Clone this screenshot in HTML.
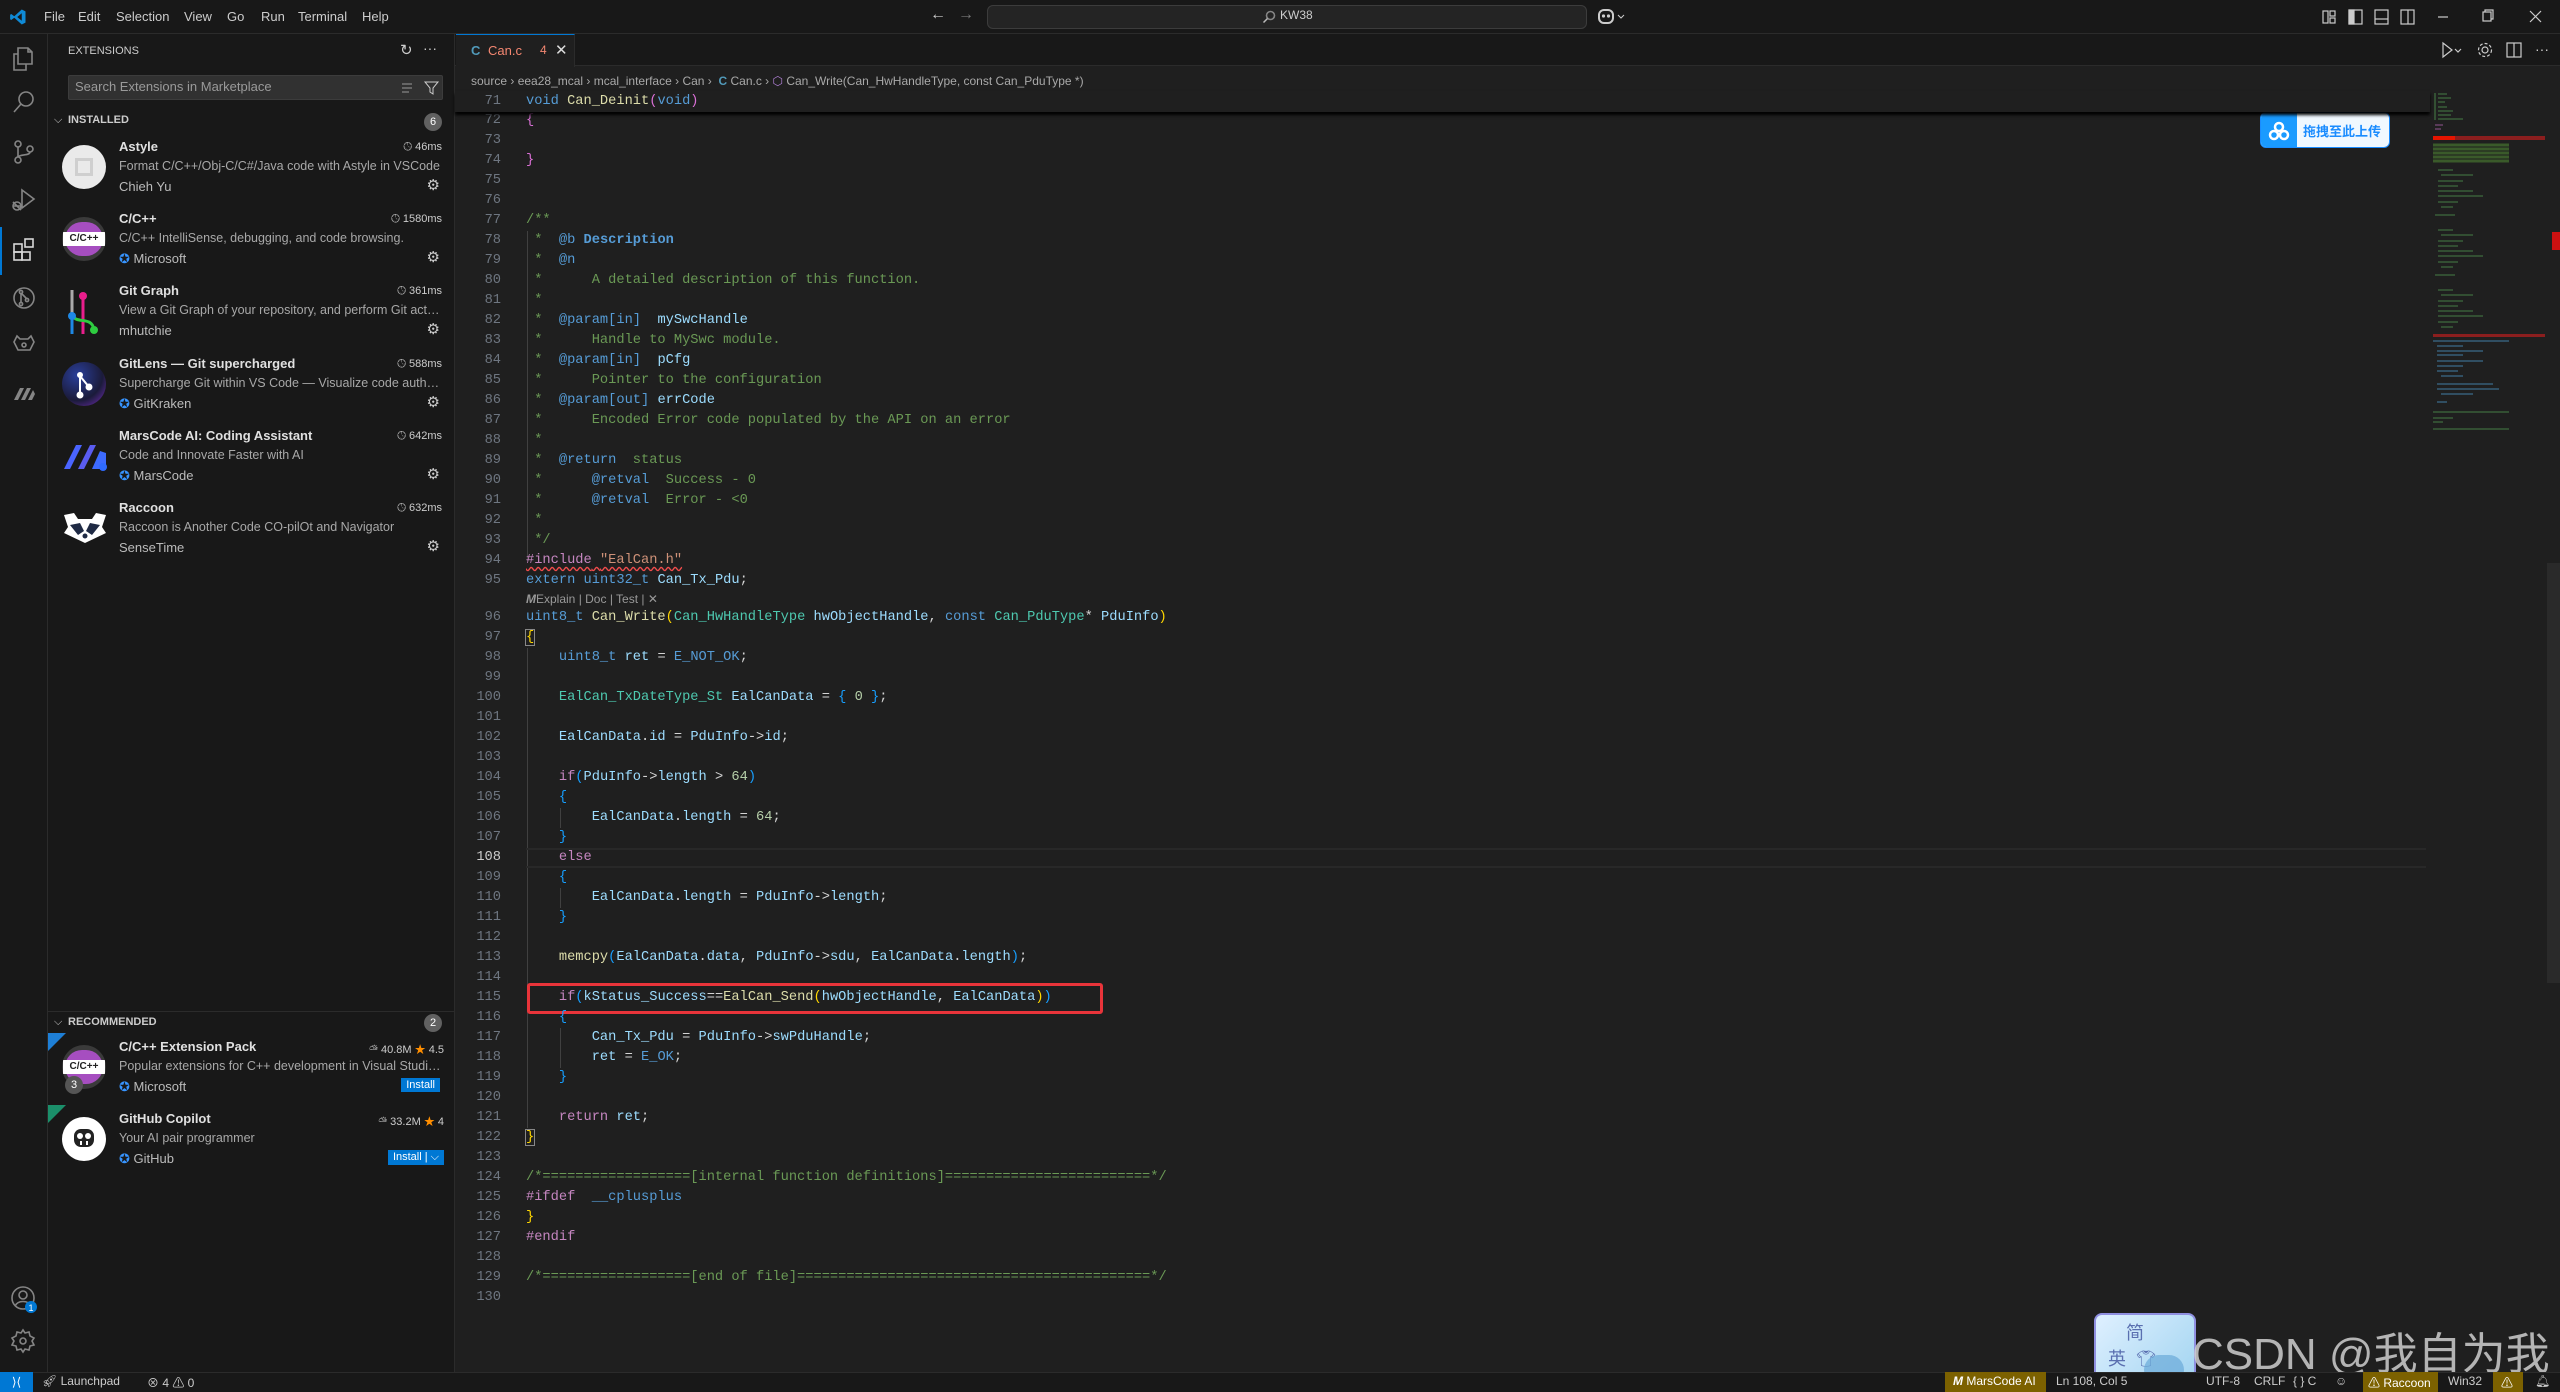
<!DOCTYPE html>
<html><head><meta charset="utf-8">
<style>
*{box-sizing:border-box;margin:0;padding:0}
body{width:2560px;height:1392px;overflow:hidden;background:#1f1f1f;font-family:"Segoe UI","Liberation Sans","Noto Sans CJK SC",sans-serif;color:#ccc;position:relative;font-size:13px}
.a{position:absolute}
#title{left:0;top:0;width:2560px;height:34px;background:#181818;border-bottom:1px solid #2b2b2b}
.menu{top:9px;font-size:13px;color:#ccc}
#act{left:0;top:34px;width:48px;height:1338px;background:#181818;border-right:1px solid #2b2b2b}
#side{left:48px;top:34px;width:407px;height:1338px;background:#181818;border-right:1px solid #2b2b2b}
#tabs{left:455px;top:34px;width:2105px;height:32px;background:#181818;border-bottom:1px solid #2b2b2b}
.code{font-family:"Liberation Mono",monospace;font-size:13.7px;white-space:pre;line-height:20px;height:20px;left:526px}
.ln{font-family:"Liberation Mono",monospace;font-size:13.7px;line-height:20px;height:20px;width:60px;left:441px;text-align:right;color:#6e7681}
.k{color:#569cd6}.t{color:#4ec9b0}.f{color:#dcdcaa}.v{color:#9cdcfe}.n{color:#b5cea8}.s{color:#ce9178}.p{color:#c586c0}.c{color:#6a9955}.w{color:#d4d4d4}.g{color:#ffd700}.m{color:#da70d6}.b{color:#179fff}.db{color:#569cd6;font-weight:bold}
.guide{width:1px;background:#404040}
.ext .nm{font-weight:bold;color:#e0e0e0;font-size:13px;white-space:nowrap}
.ext .ds{color:#a8a8a8;font-size:12.5px;white-space:nowrap;overflow:hidden;text-overflow:ellipsis;width:322px}
.ext .pb{color:#bbb;font-size:13px;white-space:nowrap}
.ext .tm{color:#ccc;font-size:11px;right:0;white-space:nowrap}
.ic{stroke:#858585;fill:none;stroke-width:1.6}
.st{top:1374px;font-size:12px;color:#ccc;white-space:nowrap}
</style></head><body>

<!-- TITLE BAR -->
<div id="title" class="a"></div>
<svg class="a" style="left:9px;top:8px" width="18" height="18" viewBox="0 0 24 24"><path d="M17 2 L22 4.5 V19.5 L17 22 L7 13 L3 16 L1.5 15 V9 L3 8 L7 11 Z M17 7 L11 12 L17 17 Z" fill="#0f8ad6"/></svg>
<div class="a menu" style="left:44px">File</div>
<div class="a menu" style="left:78px">Edit</div>
<div class="a menu" style="left:116px">Selection</div>
<div class="a menu" style="left:184px">View</div>
<div class="a menu" style="left:227px">Go</div>
<div class="a menu" style="left:261px">Run</div>
<div class="a menu" style="left:298px">Terminal</div>
<div class="a menu" style="left:362px">Help</div>
<div class="a" style="left:930px;top:6px;color:#ccc;font-size:16px">←</div>
<div class="a" style="left:958px;top:6px;color:#777;font-size:16px">→</div>
<div class="a" style="left:987px;top:5px;width:600px;height:24px;background:#242424;border:1px solid #3c3c3c;border-radius:6px"></div>
<svg class="a" style="left:1262px;top:10px" width="14" height="14" viewBox="0 0 14 14"><circle cx="8.5" cy="5.5" r="4" class="ic" stroke="#bbb"/><path d="M5.5 8.5 L1.5 12.5" stroke="#bbb" stroke-width="1.5"/></svg>
<div class="a" style="left:1280px;top:8px;font-size:12px;color:#ccc">KW38</div>
<svg class="a" style="left:1598px;top:8px" width="30" height="18" viewBox="0 0 30 18"><rect x="1" y="2" width="14" height="13" rx="5" fill="none" stroke="#ccc" stroke-width="2"/><circle cx="5.5" cy="8" r="1.6" fill="#ccc"/><circle cx="10.5" cy="8" r="1.6" fill="#ccc"/><path d="M20 7 L23 10 L26 7" stroke="#ccc" fill="none"/></svg>
<svg class="a" style="left:2320px;top:8px" width="190" height="18" viewBox="0 0 190 18">
<g fill="none" stroke="#ccc" stroke-width="1.2"><rect x="3" y="3" width="5" height="12"/><rect x="10" y="3" width="5" height="5"/><rect x="10" y="10" width="5" height="5"/>
<rect x="29" y="2" width="13" height="14"/><rect x="29" y="2" width="5" height="14" fill="#ccc"/>
<rect x="55" y="2" width="13" height="14"/><path d="M55 11 H68"/>
<rect x="81" y="2" width="13" height="14"/><path d="M88 2 V16"/>
<path d="M118 9 H128"/><rect x="163" y="4" width="8" height="9"/><path d="M165 4 V2 H173 V11 H171"/></g></svg>
<svg class="a" style="left:2528px;top:9px" width="16" height="16"><path d="M2 2 L13 13 M13 2 L2 13" stroke="#ccc" stroke-width="1.2"/></svg>

<!-- ACTIVITY BAR -->
<div id="act" class="a"></div>
<div class="a" style="left:0;top:227px;width:2px;height:48px;background:#0078d4"></div>
<svg class="a" style="left:10px;top:44px" width="28" height="360" viewBox="0 0 28 360">
<g class="ic">
<path d="M8 4 H18 L22 8 V20 H8 Z M18 4 V8 H22 M8 10 H4 V26 H16 V20"/>
<circle cx="16" cy="55" r="7"/><path d="M11 60 L4 68"/>
<circle cx="8" cy="100" r="3"/><circle cx="8" cy="116" r="3"/><circle cx="20" cy="105" r="3"/><path d="M8 103 V113 M20 108 C20 112 10 110 8 113"/>
<path d="M12 146 L24 155 L12 164 Z"/><circle cx="7" cy="162" r="4"/><path d="M3 158 L11 166 M3 162 H11"/>
</g>
<g fill="none" stroke="#d7d7d7" stroke-width="1.6"><rect x="4" y="200" width="8" height="8"/><rect x="4" y="208" width="8" height="8"/><rect x="12" y="208" width="8" height="8"/><rect x="15" y="195" width="8" height="8"/></g>
<g class="ic"><circle cx="14" cy="254" r="10"/><circle cx="11" cy="248" r="1.6"/><circle cx="11" cy="260" r="1.6"/><circle cx="17" cy="256" r="1.6"/><path d="M11 249 V259 M11 249 L17 255"/>
<path d="M4 298 L7 292 L10 295 H18 L21 292 L24 298 L20 306 H8 Z"/><circle cx="14" cy="301" r="2"/></g>
<path d="M4 356 L10 344 H14 L8 356 Z M11 356 L17 344 H21 L15 356 Z M18 356 L23 346 L25 350 L22 356 Z" fill="#858585"/>
</svg>
<svg class="a" style="left:10px;top:1285px" width="28" height="70" viewBox="0 0 28 70">
<g class="ic"><circle cx="13" cy="13" r="11"/><circle cx="13" cy="10" r="4"/><path d="M5 21 C8 15 18 15 21 21"/>
<circle cx="13" cy="56" r="3"/><path d="M13 45 L15 48 L19 47 L20 51 L24 53 L22 56 L24 60 L20 61 L19 65 L15 64 L13 67 L11 64 L7 65 L6 61 L2 60 L4 56 L2 53 L6 51 L7 47 L11 48 Z"/></g>
<circle cx="21" cy="22" r="6" fill="#0078d4"/><text x="21" y="26" font-size="9" fill="#fff" text-anchor="middle" font-family="Liberation Sans">1</text></svg>

<!-- SIDEBAR -->
<div id="side" class="a"></div>
<div class="a" style="left:68px;top:45px;font-size:11px;color:#ccc">EXTENSIONS</div>
<div class="a" style="left:400px;top:41px;font-size:15px;color:#ccc">↻</div>
<div class="a" style="left:423px;top:40px;font-size:14px;color:#ccc">···</div>
<div class="a" style="left:68px;top:75px;width:375px;height:25px;background:#313131;border:1px solid #3c3c3c;border-radius:2px"></div>
<div class="a" style="left:75px;top:79px;font-size:13px;color:#9a9a9a">Search Extensions in Marketplace</div>
<svg class="a" style="left:400px;top:80px" width="40" height="16"><g stroke="#999" fill="none"><path d="M2 4 H12 M2 8 H12 M2 12 H9"/><path d="M25 2 H38 L33 8 V14 L30 12 V8 Z" stroke="#ccc"/></g></svg>
<div class="a" style="left:54px;top:114px;font-size:11px;color:#ccc">⌵</div>
<div class="a" style="left:68px;top:114px;font-size:11px;font-weight:bold;color:#ccc">INSTALLED</div>
<div class="a" style="left:424px;top:113px;width:18px;height:18px;border-radius:9px;background:#616161;color:#fff;font-size:11px;text-align:center;line-height:18px">6</div>

<!-- extension items -->
<div class="a ext" style="left:62px;top:136px;width:380px;height:70px">
 <div class="a" style="left:0;top:9px;width:44px;height:44px;border-radius:22px;background:#eaeaea"><div class="a" style="left:13px;top:13px;width:18px;height:18px;border:3px solid #cfcfcf"></div></div>
 <div class="a nm" style="left:57px;top:3px">Astyle</div><div class="a tm" style="top:5px">🕓︎ 46ms</div>
 <div class="a ds" style="left:57px;top:23px">Format C/C++/Obj-C/C#/Java code with Astyle in VSCode</div>
 <div class="a pb" style="left:57px;top:43px">Chieh Yu</div><div class="a" style="right:2px;top:40px;font-size:15px;color:#ccc">⚙</div>
</div>
<div class="a ext" style="left:62px;top:208px;width:380px;height:70px">
 <div class="a" style="left:0;top:9px;width:44px;height:44px;border-radius:22px;background:#3a3a3a;overflow:hidden"><div class="a" style="left:3px;top:5px;width:38px;height:34px;border-radius:17px;background:#a64ec0"></div><div class="a" style="left:1px;top:15px;width:42px;height:14px;background:#fff;color:#222;font-size:10px;font-weight:bold;text-align:center;line-height:14px">C/C++</div></div>
 <div class="a nm" style="left:57px;top:3px">C/C++</div><div class="a tm" style="top:5px">🕓︎ 1580ms</div>
 <div class="a ds" style="left:57px;top:23px">C/C++ IntelliSense, debugging, and code browsing.</div>
 <div class="a pb" style="left:57px;top:43px"><span style="color:#3794ff">✪</span> Microsoft</div><div class="a" style="right:2px;top:40px;font-size:15px;color:#ccc">⚙</div>
</div>
<div class="a ext" style="left:62px;top:280px;width:380px;height:70px">
 <svg class="a" style="left:6px;top:6px" width="36" height="52"><path d="M4 4 V48" stroke="#aaa" stroke-width="3"/><path d="M4 30 V48" stroke="#1e88e5" stroke-width="3"/><path d="M15 8 V48" stroke="#e91e8c" stroke-width="3"/><path d="M4 30 C10 38 24 30 26 44" stroke="#2ecc40" stroke-width="3" fill="none"/><circle cx="4" cy="30" r="4" fill="#1e88e5"/><circle cx="15" cy="10" r="4" fill="#e91e8c"/><circle cx="26" cy="44" r="4" fill="#2ecc40"/></svg>
 <div class="a nm" style="left:57px;top:3px">Git Graph</div><div class="a tm" style="top:5px">🕓︎ 361ms</div>
 <div class="a ds" style="left:57px;top:23px">View a Git Graph of your repository, and perform Git actions</div>
 <div class="a pb" style="left:57px;top:43px">mhutchie</div><div class="a" style="right:2px;top:40px;font-size:15px;color:#ccc">⚙</div>
</div>
<div class="a ext" style="left:62px;top:353px;width:380px;height:70px">
 <div class="a" style="left:0;top:9px;width:44px;height:44px;border-radius:22px;background:radial-gradient(circle at 35% 30%,#2a3f9a,#1b1b3a 60%,#7a2fc0)"></div>
 <svg class="a" style="left:10px;top:18px" width="24" height="28"><g stroke="#fff" stroke-width="2" fill="#fff"><path d="M8 4 V24 M8 5 L17 16"/><circle cx="8" cy="4" r="2"/><circle cx="8" cy="24" r="2.5"/><circle cx="17" cy="16" r="2.5"/></g></svg>
 <div class="a nm" style="left:57px;top:3px">GitLens — Git supercharged</div><div class="a tm" style="top:5px">🕓︎ 588ms</div>
 <div class="a ds" style="left:57px;top:23px">Supercharge Git within VS Code — Visualize code authorship</div>
 <div class="a pb" style="left:57px;top:43px"><span style="color:#3794ff">✪</span> GitKraken</div><div class="a" style="right:2px;top:40px;font-size:15px;color:#ccc">⚙</div>
</div>
<div class="a ext" style="left:62px;top:425px;width:380px;height:70px">
 <svg class="a" style="left:0;top:16px" width="46" height="30"><path d="M2 28 L14 4 L20 4 L8 28 Z" fill="#4a64ff"/><path d="M16 28 L28 4 L34 4 L22 28 Z" fill="#5a5cf0"/><path d="M30 28 L38 10 L44 12 L44 28 Z" fill="#3d6bff"/><circle cx="41" cy="26" r="4" fill="#2f6bff"/></svg>
 <div class="a nm" style="left:57px;top:3px">MarsCode AI: Coding Assistant</div><div class="a tm" style="top:5px">🕓︎ 642ms</div>
 <div class="a ds" style="left:57px;top:23px">Code and Innovate Faster with AI</div>
 <div class="a pb" style="left:57px;top:43px"><span style="color:#3794ff">✪</span> MarsCode</div><div class="a" style="right:2px;top:40px;font-size:15px;color:#ccc">⚙</div>
</div>
<div class="a ext" style="left:62px;top:497px;width:380px;height:70px">
 <svg class="a" style="left:0;top:14px" width="46" height="34"><path d="M2 4 L12 2 L16 8 H30 L34 2 L44 4 L40 16 L44 22 L23 32 L2 22 L6 16 Z" fill="#fff"/><path d="M8 14 L18 12 L22 20 L16 24 Z M38 14 L28 12 L24 20 L30 24 Z" fill="#1f2a44"/><circle cx="23" cy="25" r="2.5" fill="#1f2a44"/></svg>
 <div class="a nm" style="left:57px;top:3px">Raccoon</div><div class="a tm" style="top:5px">🕓︎ 632ms</div>
 <div class="a ds" style="left:57px;top:23px">Raccoon is Another Code CO-pilOt and Navigator</div>
 <div class="a pb" style="left:57px;top:43px">SenseTime</div><div class="a" style="right:2px;top:40px;font-size:15px;color:#ccc">⚙</div>
</div>

<div class="a" style="left:48px;top:1011px;width:407px;height:1px;background:#2b2b2b"></div>
<div class="a" style="left:54px;top:1016px;font-size:11px;color:#ccc">⌵</div>
<div class="a" style="left:68px;top:1016px;font-size:11px;font-weight:bold;color:#ccc">RECOMMENDED</div>
<div class="a" style="left:424px;top:1014px;width:18px;height:18px;border-radius:9px;background:#616161;color:#fff;font-size:11px;text-align:center;line-height:18px">2</div>

<div class="a" style="left:48px;top:1033px;width:0;height:0;border-top:18px solid #1e7fd6;border-right:18px solid transparent"></div>
<div class="a ext" style="left:62px;top:1036px;width:382px;height:70px">
 <div class="a" style="left:0;top:9px;width:44px;height:44px;border-radius:22px;background:#3a3a3a;overflow:hidden"><div class="a" style="left:3px;top:5px;width:38px;height:34px;border-radius:17px;background:#a64ec0"></div><div class="a" style="left:1px;top:15px;width:42px;height:14px;background:#fff;color:#222;font-size:10px;font-weight:bold;text-align:center;line-height:14px">C/C++</div></div>
 <div class="a" style="left:3px;top:40px;width:18px;height:18px;border-radius:9px;background:#555;color:#fff;font-size:11px;text-align:center;line-height:18px">3</div>
 <div class="a nm" style="left:57px;top:3px">C/C++ Extension Pack</div><div class="a tm" style="top:5px">⛅︎ 40.8M <span style="color:#ff8e00">★</span> 4.5</div>
 <div class="a ds" style="left:57px;top:23px">Popular extensions for C++ development in Visual Studio Code</div>
 <div class="a pb" style="left:57px;top:43px"><span style="color:#3794ff">✪</span> Microsoft</div>
 <div class="a" style="right:4px;top:42px;background:#0078d4;color:#fff;font-size:11px;padding:1px 5px">Install</div>
</div>
<div class="a" style="left:48px;top:1105px;width:0;height:0;border-top:18px solid #1b8f6a;border-right:18px solid transparent"></div>
<div class="a ext" style="left:62px;top:1108px;width:382px;height:70px">
 <div class="a" style="left:0;top:9px;width:44px;height:44px;border-radius:22px;background:#fff"></div>
 <svg class="a" style="left:9px;top:18px" width="26" height="26"><rect x="3" y="3" width="20" height="18" rx="7" fill="#222"/><circle cx="9" cy="10" r="3" fill="#fff"/><circle cx="17" cy="10" r="3" fill="#fff"/><rect x="9" y="15" width="2" height="4" fill="#fff"/><rect x="15" y="15" width="2" height="4" fill="#fff"/></svg>
 <div class="a nm" style="left:57px;top:3px">GitHub Copilot</div><div class="a tm" style="top:5px">⛅︎ 33.2M <span style="color:#ff8e00">★</span> 4</div>
 <div class="a ds" style="left:57px;top:23px">Your AI pair programmer</div>
 <div class="a pb" style="left:57px;top:43px"><span style="color:#3794ff">✪</span> GitHub</div>
 <div class="a" style="right:0;top:42px;background:#0078d4;color:#fff;font-size:11px;padding:1px 5px">Install | ⌵</div>
</div>

<!-- TABS / BREADCRUMB -->
<div id="tabs" class="a"></div>
<div class="a" style="left:456px;top:34px;width:119px;height:33px;background:#1f1f1f;border-top:1px solid #0078d4;border-right:1px solid #2b2b2b"></div>
<div class="a" style="left:471px;top:43px;font-size:13px;color:#519aba;font-weight:bold">C</div>
<div class="a" style="left:488px;top:43px;font-size:13px;color:#f48771">Can.c</div>
<div class="a" style="left:540px;top:43px;font-size:12px;color:#f48771">4</div>
<div class="a" style="left:555px;top:41px;font-size:15px;color:#ddd">✕</div>
<svg class="a" style="left:2435px;top:41px" width="125" height="18"><g fill="none" stroke="#ccc" stroke-width="1.2"><path d="M8 2 L17 9 L8 16 Z"/><path d="M20 8 L23 11 L26 8"/><circle cx="50" cy="9" r="3"/><circle cx="50" cy="9" r="6.5" stroke-dasharray="3 2"/><rect x="72" y="2" width="14" height="14"/><path d="M79 2 V16"/></g><text x="100" y="13" fill="#ccc" font-size="14">···</text></svg>
<div class="a" style="left:471px;top:74px;font-size:12px;color:#a9a9a9;white-space:nowrap">source <span>›</span> eea28_mcal <span>›</span> mcal_interface <span>›</span> Can <span>›</span>&nbsp; <b style="color:#519aba">C</b> Can.c <span>›</span> <span style="color:#b180d7">⬡</span> Can_Write(Can_HwHandleType, const Can_PduType *)</div>

<!-- EDITOR -->
<div class="a guide" style="left:527px;top:231px;height:330px"></div>
<div class="a guide" style="left:527px;top:648px;height:480px"></div>
<div class="a guide" style="left:560px;top:808px;height:20px"></div>
<div class="a guide" style="left:560px;top:888px;height:20px"></div>
<div class="a guide" style="left:560px;top:1028px;height:40px"></div>
<div class="a" style="left:526px;top:848px;width:1900px;height:20px;border-top:2px solid #282828;border-bottom:2px solid #282828"></div>

<div id="ed" class="a" style="left:0;top:1px;width:2560px;height:1300px">
<div class="a ln" style="top:91px;z-index:3">71</div>
<div class="a code" style="top:91px;z-index:3"><span class="k">void</span> <span class="f">Can_Deinit</span><span class="m">(</span><span class="k">void</span><span class="m">)</span></div>
<div class="a" style="left:455px;top:90px;width:1975px;height:21px;background:#1f1f1f;z-index:2;box-shadow:0 3px 3px #000"></div>

<div class="a ln" style="top:110px">72</div><div class="a code" style="top:110px"><span class="m">{</span></div>
<div class="a ln" style="top:130px">73</div>
<div class="a ln" style="top:150px">74</div><div class="a code" style="top:150px"><span class="m">}</span></div>
<div class="a ln" style="top:170px">75</div>
<div class="a ln" style="top:190px">76</div>
<div class="a ln" style="top:210px">77</div><div class="a code c" style="top:210px">/**</div>
<div class="a ln" style="top:230px">78</div><div class="a code c" style="top:230px"> *  <span class="k">@b</span> <span class="db">Description</span></div>
<div class="a ln" style="top:250px">79</div><div class="a code c" style="top:250px"> *  <span class="k">@n</span></div>
<div class="a ln" style="top:270px">80</div><div class="a code c" style="top:270px"> *      A detailed description of this function.</div>
<div class="a ln" style="top:290px">81</div><div class="a code c" style="top:290px"> *</div>
<div class="a ln" style="top:310px">82</div><div class="a code c" style="top:310px"> *  <span class="k">@param[in]</span>  <span class="v">mySwcHandle</span></div>
<div class="a ln" style="top:330px">83</div><div class="a code c" style="top:330px"> *      Handle to MySwc module.</div>
<div class="a ln" style="top:350px">84</div><div class="a code c" style="top:350px"> *  <span class="k">@param[in]</span>  <span class="v">pCfg</span></div>
<div class="a ln" style="top:370px">85</div><div class="a code c" style="top:370px"> *      Pointer to the configuration</div>
<div class="a ln" style="top:390px">86</div><div class="a code c" style="top:390px"> *  <span class="k">@param[out]</span> <span class="v">errCode</span></div>
<div class="a ln" style="top:410px">87</div><div class="a code c" style="top:410px"> *      Encoded Error code populated by the API on an error</div>
<div class="a ln" style="top:430px">88</div><div class="a code c" style="top:430px"> *</div>
<div class="a ln" style="top:450px">89</div><div class="a code c" style="top:450px"> *  <span class="k">@return</span>  status</div>
<div class="a ln" style="top:470px">90</div><div class="a code c" style="top:470px"> *      <span class="k">@retval</span>  Success - 0</div>
<div class="a ln" style="top:490px">91</div><div class="a code c" style="top:490px"> *      <span class="k">@retval</span>  Error - &lt;0</div>
<div class="a ln" style="top:510px">92</div><div class="a code c" style="top:510px"> *</div>
<div class="a ln" style="top:530px">93</div><div class="a code c" style="top:530px"> */</div>
<div class="a ln" style="top:550px">94</div><div class="a code" style="top:550px;text-decoration:underline wavy #f14c4c;text-underline-offset:3px"><span class="p">#include</span> <span class="s">"EalCan.h"</span></div>
<div class="a ln" style="top:570px">95</div><div class="a code" style="top:570px"><span class="k">extern</span> <span class="k">uint32_t</span> <span class="v">Can_Tx_Pdu</span><span class="w">;</span></div>
<div class="a" style="left:526px;top:591px;font-size:12px;color:#999;white-space:nowrap"><b style="font-style:italic">M</b>Explain | Doc | Test | ✕</div>
<div class="a ln" style="top:607px">96</div><div class="a code" style="top:607px"><span class="k">uint8_t</span> <span class="f">Can_Write</span><span class="g">(</span><span class="t">Can_HwHandleType</span> <span class="v">hwObjectHandle</span><span class="w">,</span> <span class="k">const</span> <span class="t">Can_PduType</span><span class="w">*</span> <span class="v">PduInfo</span><span class="g">)</span></div>
<div class="a ln" style="top:627px">97</div><div class="a code" style="top:627px"><span class="g" style="outline:1px solid #888">{</span></div>
<div class="a ln" style="top:647px">98</div><div class="a code" style="top:647px">    <span class="k">uint8_t</span> <span class="v">ret</span> <span class="w">=</span> <span class="k">E_NOT_OK</span><span class="w">;</span></div>
<div class="a ln" style="top:667px">99</div>
<div class="a ln" style="top:687px">100</div><div class="a code" style="top:687px">    <span class="t">EalCan_TxDateType_St</span> <span class="v">EalCanData</span> <span class="w">=</span> <span class="b">{</span> <span class="n">0</span> <span class="b">}</span><span class="w">;</span></div>
<div class="a ln" style="top:707px">101</div>
<div class="a ln" style="top:727px">102</div><div class="a code" style="top:727px">    <span class="v">EalCanData</span><span class="w">.</span><span class="v">id</span> <span class="w">=</span> <span class="v">PduInfo</span><span class="w">-&gt;</span><span class="v">id</span><span class="w">;</span></div>
<div class="a ln" style="top:747px">103</div>
<div class="a ln" style="top:767px">104</div><div class="a code" style="top:767px">    <span class="p">if</span><span class="b">(</span><span class="v">PduInfo</span><span class="w">-&gt;</span><span class="v">length</span> <span class="w">&gt;</span> <span class="n">64</span><span class="b">)</span></div>
<div class="a ln" style="top:787px">105</div><div class="a code" style="top:787px">    <span class="b">{</span></div>
<div class="a ln" style="top:807px">106</div><div class="a code" style="top:807px">        <span class="v">EalCanData</span><span class="w">.</span><span class="v">length</span> <span class="w">=</span> <span class="n">64</span><span class="w">;</span></div>
<div class="a ln" style="top:827px">107</div><div class="a code" style="top:827px">    <span class="b">}</span></div>
<div class="a ln" style="top:847px;color:#ccc">108</div><div class="a code" style="top:847px">    <span class="p">else</span></div>
<div class="a ln" style="top:867px">109</div><div class="a code" style="top:867px">    <span class="b">{</span></div>
<div class="a ln" style="top:887px">110</div><div class="a code" style="top:887px">        <span class="v">EalCanData</span><span class="w">.</span><span class="v">length</span> <span class="w">=</span> <span class="v">PduInfo</span><span class="w">-&gt;</span><span class="v">length</span><span class="w">;</span></div>
<div class="a ln" style="top:907px">111</div><div class="a code" style="top:907px">    <span class="b">}</span></div>
<div class="a ln" style="top:927px">112</div>
<div class="a ln" style="top:947px">113</div><div class="a code" style="top:947px">    <span class="f">memcpy</span><span class="b">(</span><span class="v">EalCanData</span><span class="w">.</span><span class="v">data</span><span class="w">,</span> <span class="v">PduInfo</span><span class="w">-&gt;</span><span class="v">sdu</span><span class="w">,</span> <span class="v">EalCanData</span><span class="w">.</span><span class="v">length</span><span class="b">)</span><span class="w">;</span></div>
<div class="a ln" style="top:967px">114</div>
<div class="a ln" style="top:987px">115</div><div class="a code" style="top:987px">    <span class="p">if</span><span class="b">(</span><span class="v">kStatus_Success</span><span class="w">==</span><span class="f">EalCan_Send</span><span class="g">(</span><span class="v">hwObjectHandle</span><span class="w">,</span> <span class="v">EalCanData</span><span class="g">)</span><span class="b">)</span></div>
<div class="a" style="left:527px;top:982px;width:576px;height:31px;border:3px solid #e8343a;border-radius:3px"></div>
<div class="a ln" style="top:1007px">116</div><div class="a code" style="top:1007px">    <span class="b">{</span></div>
<div class="a ln" style="top:1027px">117</div><div class="a code" style="top:1027px">        <span class="v">Can_Tx_Pdu</span> <span class="w">=</span> <span class="v">PduInfo</span><span class="w">-&gt;</span><span class="v">swPduHandle</span><span class="w">;</span></div>
<div class="a ln" style="top:1047px">118</div><div class="a code" style="top:1047px">        <span class="v">ret</span> <span class="w">=</span> <span class="k">E_OK</span><span class="w">;</span></div>
<div class="a ln" style="top:1067px">119</div><div class="a code" style="top:1067px">    <span class="b">}</span></div>
<div class="a ln" style="top:1087px">120</div>
<div class="a ln" style="top:1107px">121</div><div class="a code" style="top:1107px">    <span class="p">return</span> <span class="v">ret</span><span class="w">;</span></div>
<div class="a ln" style="top:1127px">122</div><div class="a code" style="top:1127px"><span class="g" style="outline:1px solid #888">}</span></div>
<div class="a ln" style="top:1147px">123</div>
<div class="a ln" style="top:1167px">124</div><div class="a code c" style="top:1167px">/*==================[internal function definitions]=========================*/</div>
<div class="a ln" style="top:1187px">125</div><div class="a code" style="top:1187px"><span class="p">#ifdef</span>  <span class="k">__cplusplus</span></div>
<div class="a ln" style="top:1207px">126</div><div class="a code" style="top:1207px"><span class="g">}</span></div>
<div class="a ln" style="top:1227px">127</div><div class="a code" style="top:1227px"><span class="p">#endif</span></div>
<div class="a ln" style="top:1247px">128</div>
<div class="a ln" style="top:1267px">129</div><div class="a code c" style="top:1267px">/*==================[end of file]===========================================*/</div>
<div class="a ln" style="top:1287px">130</div>
</div>

<!-- Baidu upload -->
<div class="a" style="left:2260px;top:112px;width:130px;height:36px;border-radius:6px;background:#f0f8ff;border:1px solid #1a8cff;overflow:hidden">
 <div class="a" style="left:0;top:0;width:36px;height:36px;background:#1a9bff"></div>
 <svg class="a" style="left:7px;top:8px" width="22" height="20"><g fill="none" stroke="#fff" stroke-width="2.5"><circle cx="11" cy="6" r="4"/><circle cx="6" cy="14" r="4"/><circle cx="16" cy="14" r="4"/></g></svg>
 <div class="a" style="left:42px;top:8px;font-size:13px;font-weight:bold;color:#1a8cff;font-family:'Noto Sans CJK SC',sans-serif">拖拽至此上传</div>
</div>

<!-- minimap -->
<svg class="a" style="left:2433px;top:90px" width="115" height="262">
<g stroke-width="1.3">
<path d="M2 3 V30 M5 4 H14 M5 8 H18 M5 12 H12 M5 17 H14 M5 21 H20 M5 25 H18 M5 29 H30" stroke="#3f6b3f"/>
<path d="M2 35 H10 M2 39 H8" stroke="#7a4a7a"/>
<rect x="0" y="46" width="112" height="4" fill="#8b1e1e"/><rect x="0" y="46" width="22" height="4" fill="#e51400"/>
<path d="M0 55 H76 M0 59 H76 M0 63 H76 M0 67 H76 M0 71 H76" stroke="#3a5a2a" stroke-width="3"/>
<path d="M5 80 H20 M8 85 H40 M5 91 H30 M5 96 H25 M5 101 H40 M5 106 H50 M5 112 H25 M8 117 H20 M2 125 H22" stroke="#3f6b3f"/>
<path d="M5 140 H20 M8 145 H40 M5 151 H30 M5 156 H25 M5 161 H40 M5 166 H50 M5 172 H25 M8 177 H20 M2 185 H22" stroke="#3f6b3f"/>
<path d="M5 200 H20 M8 205 H40 M5 211 H30 M5 216 H25 M5 221 H40 M5 226 H50 M5 232 H25 M8 237 H20" stroke="#3f6b3f"/>
<rect x="0" y="244" width="112" height="3" fill="#8b1e1e"/><path d="M0 251 H76 M4 256 H30 M4 261 H50" stroke="#3a6a8a"/>
</g></svg>
<svg class="a" style="left:2433px;top:352px" width="115" height="90"><g stroke-width="1.3"><path d="M4 3 H30 M4 9 H50 M4 14 H30 M4 19 H25 M8 24 H30 M4 32 H60 M4 37 H66 M8 42 H40 M4 50 H14" stroke="#3a6a8a"/><path d="M0 60 H76 M0 66 H20 M0 70 H10 M0 77 H76" stroke="#3f6b3f"/></g></svg>
<div class="a" style="left:2547px;top:563px;width:13px;height:420px;background:#2a2a2a"></div>
<div class="a" style="left:2552px;top:232px;width:8px;height:18px;background:#c11"></div>

<!-- IME image & watermark -->
<div class="a" style="left:2094px;top:1313px;width:102px;height:78px;border-radius:8px;background:linear-gradient(135deg,#dff0ff,#9fd3f0);border:2px solid #8f8fe0;font-family:'Noto Sans CJK SC',sans-serif;color:#5a6fb0">
 <div class="a" style="left:30px;top:4px;font-size:18px">简</div><div class="a" style="left:12px;top:30px;font-size:18px">英</div><div class="a" style="left:40px;top:30px;font-size:16px">👕︎</div>
 <div class="a" style="left:48px;top:40px;width:40px;height:30px;border-radius:15px;background:#6aa9d8;opacity:.7"></div>
</div>
<div class="a" style="left:2192px;top:1318px;font-size:44px;color:#cfcfcf;opacity:.85;white-space:nowrap;font-family:'Liberation Sans','Noto Sans CJK SC',sans-serif">CSDN @我自为我</div>

<!-- STATUS BAR -->
<div class="a" style="left:0;top:1372px;width:2560px;height:20px;background:#181818;border-top:1px solid #2b2b2b"></div>
<div class="a" style="left:0;top:1372px;width:33px;height:20px;background:#0078d4;color:#fff;font-size:12px;text-align:center;line-height:20px">⟩⟨</div>
<div class="a st" style="left:42px">🚀︎ Launchpad</div>
<div class="a st" style="left:147px">⊗ 4 ⚠ 0</div>
<div class="a" style="left:1945px;top:1372px;width:101px;height:20px;background:#7c6100"></div>
<div class="a st" style="left:1953px;color:#fff"><b><i>M</i></b> MarsCode AI</div>
<div class="a st" style="left:2056px">Ln 108, Col 5</div>
<div class="a st" style="left:2206px">UTF-8</div>
<div class="a st" style="left:2254px">CRLF</div>
<div class="a st" style="left:2293px">{ } C</div>
<div class="a st" style="left:2335px">☺</div>
<div class="a" style="left:2363px;top:1372px;width:75px;height:20px;background:#7c6100"></div>
<div class="a st" style="left:2368px;color:#fff">⚠ Raccoon</div>
<div class="a st" style="left:2448px">Win32</div>
<div class="a" style="left:2493px;top:1372px;width:30px;height:20px;background:#7c6100"></div>
<div class="a st" style="left:2501px;color:#fff">⚠</div>
<div class="a st" style="left:2535px">🔔︎</div>
</body></html>
